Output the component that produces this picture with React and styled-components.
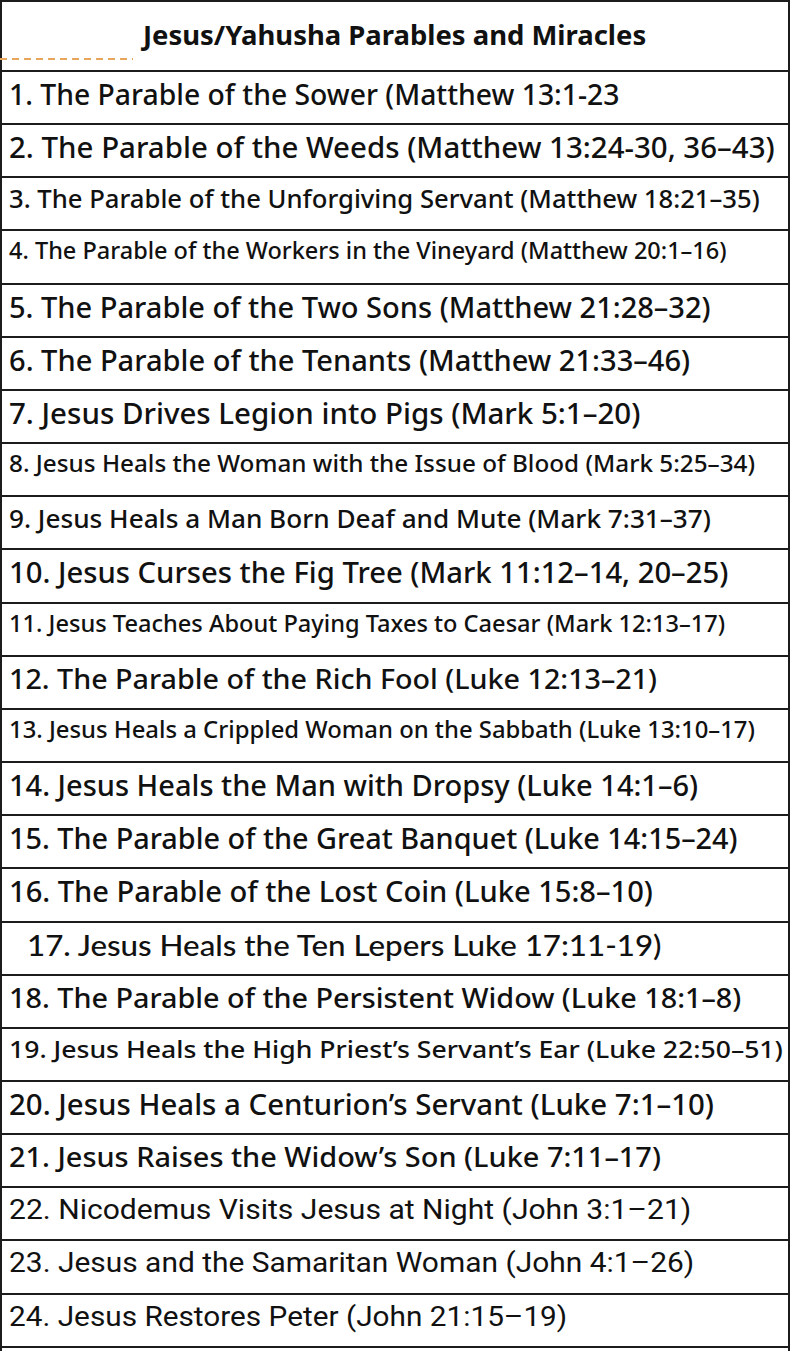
import React, { useLayoutEffect, useRef, useState } from 'react'
import styled, { createGlobalStyle } from 'styled-components'

const GlobalStyle = createGlobalStyle`
  html, body {
    margin: 0;
    padding: 0;
    background: #fff;
  }
  body {
    width: 794px;
    height: 1351px;
    overflow: hidden;
    font-family: "Noto Sans", "Open Sans", sans-serif;
    color: #141414;
  }
`

const NARROW = 'Roboto, "Liberation Sans", Arial, sans-serif'

const ITEMS = [
  { text: '1. The Parable of the Sower (Matthew 13:1-23', size: 28, end: 620 },
  { text: '2. The Parable of the Weeds (Matthew 13:24-30, 36–43)', size: 28, end: 775 },
  { text: '3. The Parable of the Unforgiving Servant (Matthew 18:21–35)', size: 25, end: 760 },
  { text: '4. The Parable of the Workers in the Vineyard (Matthew 20:1–16)', size: 23, end: 727 },
  { text: '5. The Parable of the Two Sons (Matthew 21:28–32)', size: 28, end: 711 },
  { text: '6. The Parable of the Tenants (Matthew 21:33–46)', size: 28, end: 690 },
  { text: '7. Jesus Drives Legion into Pigs (Mark 5:1–20)', size: 28, end: 640 },
  { text: '8. Jesus Heals the Woman with the Issue of Blood (Mark 5:25–34)', size: 23, end: 755 },
  { text: '9. Jesus Heals a Man Born Deaf and Mute (Mark 7:31–37)', size: 26, end: 711 },
  { text: '10. Jesus Curses the Fig Tree (Mark 11:12–14, 20–25)', size: 28, end: 728 },
  { text: '11. Jesus Teaches About Paying Taxes to Caesar (Mark 12:13–17)', size: 23, end: 725 },
  { text: '12. The Parable of the Rich Fool (Luke 12:13–21)', size: 27, end: 657 },
  { text: '13. Jesus Heals a Crippled Woman on the Sabbath (Luke 13:10–17)', size: 23, end: 755 },
  { text: '14. Jesus Heals the Man with Dropsy (Luke 14:1–6)', size: 28, end: 698 },
  { text: '15. The Parable of the Great Banquet (Luke 14:15–24)', size: 28, end: 738 },
  { text: '16. The Parable of the Lost Coin (Luke 15:8–10)', size: 28, end: 653 },
  { text: '17. Jesus Heals the Ten Lepers Luke 17:11-19)', size: 28, end: 662, start: 27, font: 'Lato, "Noto Sans", sans-serif' },
  { text: '18. The Parable of the Persistent Widow (Luke 18:1–8)', size: 27, end: 741 },
  { text: '19. Jesus Heals the High Priest’s Servant’s Ear (Luke 22:50–51)', size: 24, end: 783 },
  { text: '20. Jesus Heals a Centurion’s Servant (Luke 7:1–10)', size: 28, end: 714 },
  { text: '21. Jesus Raises the Widow’s Son (Luke 7:11–17)', size: 27, end: 661 },
  { text: '22. Nicodemus Visits Jesus at Night (John 3:1–21)', size: 28, end: 691, font: NARROW, weight: 400 },
  { text: '23. Jesus and the Samaritan Woman (John 4:1–26)', size: 28, end: 694, font: NARROW, weight: 400 },
  { text: '24. Jesus Restores Peter (John 21:15–19)', size: 28, end: 567, font: NARROW, weight: 400 },
]

// measure the text once and squeeze/stretch it so it ends where the original does
function useFit(width) {
  const ref = useRef(null)
  const [scale, setScale] = useState(1)
  useLayoutEffect(() => {
    const measure = () => {
      if (!ref.current) return
      const w = ref.current.offsetWidth
      if (w) setScale(width / w)
    }
    measure()
    if (document.fonts && document.fonts.ready) document.fonts.ready.then(measure)
  }, [width])
  return [ref, scale]
}

function Entry({ item }) {
  const start = item.start || 9
  const [ref, scale] = useFit(item.end - start)
  return (
    <Row $indent={start - 2}>
      <Label
        ref={ref}
        $size={item.size}
        $font={item.font}
        $weight={item.weight}
        style={{ transform: `scaleX(${scale})` }}
      >
        {item.text}
      </Label>
    </Row>
  )
}

function Header() {
  const [ref, scale] = useFit(503)
  return (
    <HeadRow>
      <Title ref={ref} style={{ transform: `scaleX(${scale})` }}>
        Jesus/Yahusha Parables and Miracles
      </Title>
      <Dashes />
    </HeadRow>
  )
}

function App() {
  return (
    <>
      <GlobalStyle />
      <Table>
        <Header />
        {ITEMS.map((item) => (
          <Entry key={item.text} item={item} />
        ))}
        <Row $indent={7} />
      </Table>
    </>
  )
}

export default App

const Table = styled.div`
  width: 790px;
  display: flex;
  flex-direction: column;
  border-left: 2px solid #1c1c1c;
  border-right: 2px solid #1c1c1c;
  border-top: 2px solid #1c1c1c;
  box-sizing: border-box;
`

const HeadRow = styled.div`
  position: relative;
  height: 70px;
  display: flex;
  align-items: flex-start;
  justify-content: center;
  padding-top: 19px;
  box-sizing: border-box;
  border-bottom: 2px solid #1c1c1c;
`

const Title = styled.span`
  display: inline-block;
  white-space: nowrap;
  transform-origin: center top;
  font-family: "Noto Sans", "Open Sans", sans-serif;
  font-weight: 700;
  font-size: 27px;
  line-height: 1;
  color: #111;
`

const Dashes = styled.div`
  position: absolute;
  left: -2px;
  top: 56px;
  width: 133px;
  height: 2px;
  background: repeating-linear-gradient(
    to right,
    #e9a55c 0,
    #e9a55c 7px,
    transparent 7px,
    transparent 12px
  );
`

const Row = styled.div`
  height: 53.17px;
  flex-shrink: 0;
  display: flex;
  align-items: flex-start;
  padding: 8px 0 0 ${(p) => p.$indent}px;
  box-sizing: border-box;
  border-bottom: 2px solid #1c1c1c;
  overflow: hidden;
`

const Label = styled.span`
  display: inline-block;
  white-space: nowrap;
  transform-origin: left top;
  font-family: ${(p) => p.$font || '"Noto Sans", "Open Sans", sans-serif'};
  font-size: ${(p) => p.$size}px;
  font-weight: ${(p) => p.$weight || 500};
  line-height: 1;
  color: #111;
`
